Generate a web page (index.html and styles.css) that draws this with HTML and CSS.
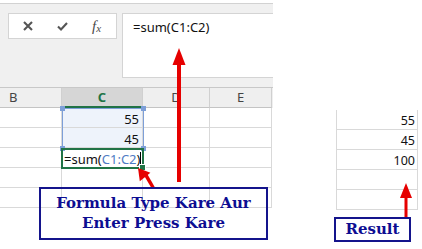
FILE: index.html
```html
<!DOCTYPE html>
<html lang="en">

<head>
    <meta charset="UTF-8">
    <title>sum formula</title>
    <link rel="stylesheet" href="styles.css">
</head>

<body>
    <div class="page">

        <!-- excel ka left hissa -->
        <div class="sheet">
            <div class="ribbon">
                <div class="bar">
                    <div class="tools">
                        <svg class="ico" width="10" height="10" viewBox="0 0 10 10">
                            <path d="M1 1 L9 9 M9 1 L1 9" />
                        </svg>
                        <svg class="ico" width="11" height="9" viewBox="0 0 11 9">
                            <path d="M1 4.5 L4 7.5 L10 1" />
                        </svg>
                        <span class="fx">f<sub>x</sub></span>
                    </div>
                    <div class="formula">=sum(C1:C2)</div>
                </div>
            </div>

            <div class="heads">
                <div class="hd first">B</div>
                <div class="hd on">C</div>
                <div class="hd">D</div>
                <div class="hd">E</div>
            </div>

            <div class="grid">
                <div class="cell"></div><div class="cell num">55</div><div class="cell"></div><div class="cell"></div>
                <div class="cell"></div><div class="cell num">45</div><div class="cell"></div><div class="cell"></div>
                <div class="cell"></div><div class="cell edit">=sum(<span class="ref">C1:C2</span>)</div><div class="cell"></div><div class="cell"></div>
                <div class="cell"></div><div class="cell"></div><div class="cell"></div><div class="cell"></div>
                <div class="cell"></div><div class="cell"></div><div class="cell"></div><div class="cell"></div>

                <div class="range">
                    <span class="dot tl"></span><span class="dot tr"></span>
                    <span class="dot bl"></span><span class="dot br"></span>
                </div>
                <div class="active"><span class="caret"></span><span class="handle"></span></div>
            </div>
        </div>

        <!-- result wala hissa -->
        <div class="result-col">
            <div class="rcell">55</div>
            <div class="rcell">45</div>
            <div class="rcell">100</div>
            <div class="rcell"></div>
            <div class="rcell"></div>
        </div>

        <svg class="arrows" width="422" height="249" viewBox="0 0 422 249">
            <rect x="177" y="63" width="4" height="119" />
            <polygon points="179,48 172.5,65 185.5,65" />

            <polygon points="138,168 150.4,172.8 139.8,181.2" />
            <polygon points="144,175.5 147,173.5 155,187.5 152,189" />

            <rect x="404.5" y="196" width="3" height="22" />
            <polygon points="406,183 400,198 412,198" />
        </svg>

        <div class="note note-main">Formula Type Kare Aur<br>Enter Press Kare</div>
        <div class="note note-result">Result</div>
    </div>
</body>

</html>
```

FILE: styles.css
```css
body {
    margin: 0;
    background-color: #ffffff;
    font-family: "Noto Sans", sans-serif;
}

.page {
    position: relative;
    display: flex;
    align-items: flex-start;
    width: 422px;
    height: 249px;
    overflow: hidden;
}

/* formula bar */
.sheet {
    width: 273px;
    padding-top: 3px;
}

.ribbon {
    background-color: #f0f0f0;
    border-top: 1px solid #d2d2d2;
    border-bottom: 1px solid #c8c8c8;
    padding: 9px 0 9px 8px;
}

.bar {
    display: flex;
    align-items: flex-start;
    gap: 5px;
}

.tools {
    display: flex;
    align-items: center;
    gap: 24px;
    width: 109px;
    height: 26px;
    box-sizing: border-box;
    padding-left: 14px;
    background-color: #ffffff;
    border: 1px solid #d4d4d4;
}

.ico path {
    fill: none;
    stroke: #555555;
    stroke-width: 2.1;
}

.fx {
    font-family: "Liberation Serif", serif;
    font-style: italic;
    font-size: 15px;
    color: #4a4a4a;
    line-height: 1;
}

.fx sub {
    font-size: 11px;
    vertical-align: -1px;
}

.formula {
    flex: 1;
    height: 65px;
    box-sizing: border-box;
    padding: 4px 0 0 10px;
    background-color: #ffffff;
    border: 1px solid #d4d4d4;
    border-right: 0;
    font-size: 13px;
    line-height: 18px;
    color: #111111;
}

/* kolonne overskrift */
.heads,
.grid {
    display: grid;
    grid-template-columns: 62px 81px 67px 62px;
}

.heads {
    background-color: #efefef;
}

.hd {
    height: 20px;
    box-sizing: border-box;
    border-right: 1px solid #d0d0d0;
    border-bottom: 1px solid #c4c4c4;
    text-align: center;
    font-size: 13px;
    line-height: 19px;
    color: #444444;
}

.hd.first {
    text-align: left;
    padding-left: 9px;
}

.hd.on {
    background-color: #d6d6d6;
    border-bottom: 2px solid #217346;
    color: #217346;
    font-weight: bold;
}

/* celler */
.grid {
    position: relative;
    grid-auto-rows: 20px;
}

.cell {
    box-sizing: border-box;
    border-right: 1px solid #d9d9d9;
    border-bottom: 1px solid #d9d9d9;
    padding: 4px 3px 0 0;
    font-size: 13px;
    line-height: 15px;
    color: #111111;
    white-space: nowrap;
}

.num {
    text-align: right;
    background-color: #eef3fb;
}

.edit {
    padding-left: 2px;
}

.ref {
    color: #4f7bc4;
}

.range {
    position: absolute;
    left: 62px;
    top: 0;
    width: 82px;
    height: 41px;
    box-sizing: border-box;
    border: 1px solid #7d9fd8;
}

.dot {
    position: absolute;
    width: 5px;
    height: 5px;
    background-color: #7d9fd8;
}

.tl { left: -3px; top: -3px; }
.tr { right: -3px; top: -3px; }
.bl { left: -3px; bottom: -3px; }
.br { right: -3px; bottom: -3px; }

.active {
    position: absolute;
    left: 61px;
    top: 40px;
    width: 83px;
    height: 21px;
    box-sizing: border-box;
    border: 2px solid #217346;
}

.caret {
    position: absolute;
    right: 1px;
    top: 2px;
    width: 1px;
    height: 14px;
    background-color: #000000;
}

.handle {
    position: absolute;
    right: -4px;
    bottom: -4px;
    width: 5px;
    height: 5px;
    background-color: #217346;
    border: 1px solid #ffffff;
}

/* resultat */
.result-col {
    width: 82px;
    margin-left: 63px;
    margin-top: 110px;
    box-sizing: border-box;
    border-left: 1px solid #d9d9d9;
    border-right: 1px solid #d9d9d9;
}

.rcell {
    height: 20px;
    box-sizing: border-box;
    border-bottom: 1px solid #d9d9d9;
    padding: 3px 2px 0 0;
    text-align: right;
    font-size: 12.5px;
    line-height: 15px;
    color: #111111;
}

/* piler og bokser */
.arrows {
    position: absolute;
    left: 0;
    top: 0;
}

.arrows rect,
.arrows polygon {
    fill: #e60000;
}

.note {
    position: absolute;
    box-sizing: border-box;
    border: 2px solid #14148c;
    text-align: center;
    font-family: "DejaVu Serif", serif;
    font-weight: bold;
    font-size: 15px;
    color: #0d0d92;
    white-space: nowrap;
}

.note-main {
    left: 39px;
    top: 187px;
    width: 229px;
    height: 53px;
    padding-top: 4px;
    line-height: 20px;
}

.note-result {
    left: 334px;
    top: 217px;
    width: 77px;
    height: 25px;
    line-height: 21px;
}
```
